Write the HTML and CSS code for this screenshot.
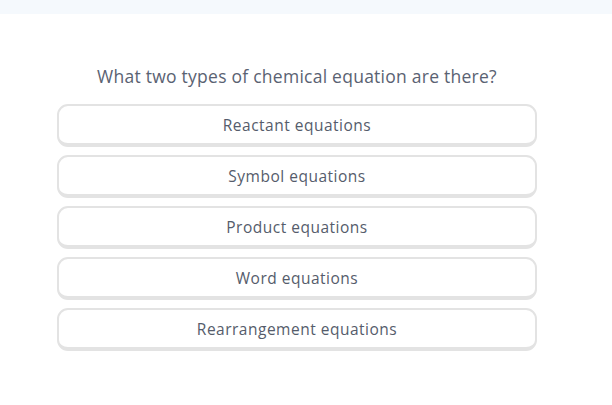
FILE: index.html
```html
<!DOCTYPE html>
<html lang="en">
<head>
  <meta charset="UTF-8" />
  <meta name="viewport" content="width=device-width, initial-scale=1.0"/>
  <title>Quiz</title>
  <link rel="stylesheet" href="styles.css">
</head>
<body>

<div class="topbar"></div>

<div class="quiz">
  <h2 class="question">What two types of chemical equation are there?</h2>
  <div class="options">
    <button class="option">Reactant equations</button>
    <button class="option">Symbol equations</button>
    <button class="option">Product equations</button>
    <button class="option">Word equations</button>
    <button class="option">Rearrangement equations</button>
  </div>
</div>

</body>
</html>
```
FILE: styles.css
```css
body {
  margin: 0;
  font-family: "Open Sans", Lato, sans-serif;
  background: #fff;
  color: #555c6b;
}

.topbar {
  height: 14px;
  background: #f5f9fd;
}

.quiz {
  width: 594px;
  display: flex;
  flex-direction: column;
  align-items: center;
}

.question {
  margin: 50px 0 16px;
  font-size: 17.5px;
  font-weight: 400;
  letter-spacing: 0.25px;
  color: #5a6272;
}

.options {
  width: 480px;
  display: flex;
  flex-direction: column;
  gap: 8px;
}

.option {
  height: 43px;
  background: #fff;
  border: 2px solid #e3e3e3;
  border-bottom-width: 4px;
  border-radius: 11px;
  font-family: inherit;
  font-size: 15.5px;
  letter-spacing: 0.5px;
  color: #555c6b;
  cursor: pointer;
}
```
